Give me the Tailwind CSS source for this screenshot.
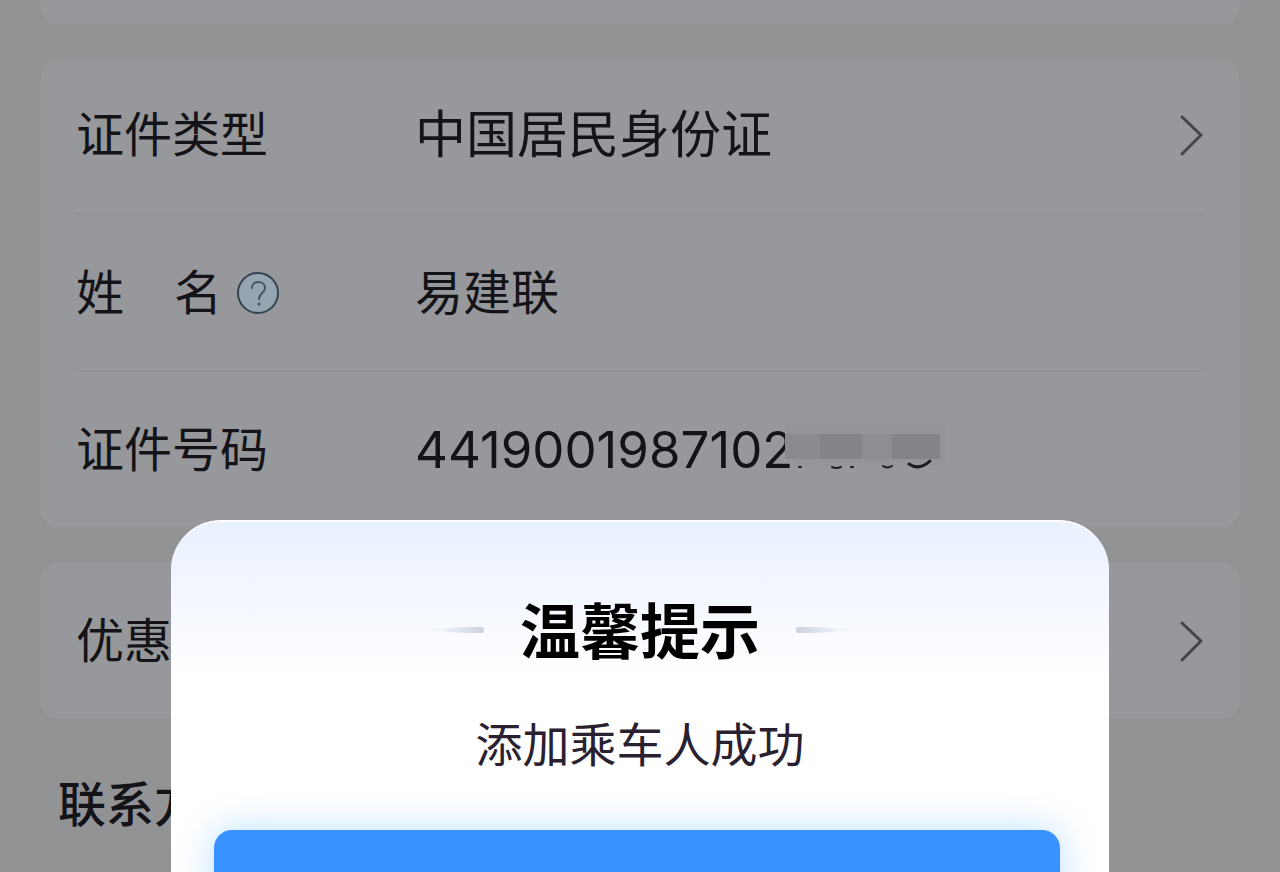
<!DOCTYPE html>
<html lang="zh-CN">
<head>
    <meta charset="UTF-8">
    <meta name="viewport" content="width=device-width, initial-scale=1.0">
    <title>添加乘车人</title>
    <script src="https://cdn.jsdelivr.net/npm/@tailwindcss/browser@4"></script>
</head>
<body class="relative h-screen overflow-hidden bg-[#929395] font-['Noto_Sans_CJK_SC',sans-serif] text-[48px] leading-[64px] text-[#141418]">
<main class="px-[41px]">
    <div class="h-[24px] rounded-b-2xl bg-[#97989b]"></div>

    <form class="mt-[36px] rounded-2xl bg-[#97989b] px-[35px]">
        <div class="flex h-[155px] items-center border-b-2 border-[#919296] pb-3">
            <label for="tipo" class="w-[339px] shrink-0">证件类型</label>
            <button type="button" id="tipo" class="flex flex-1 items-center justify-between text-left text-[51px]">
                中国居民身份证
                <svg class="mt-2 h-[44px] w-[28px]" viewBox="0 0 28 44" fill="none" stroke="#444548" stroke-width="3" stroke-linecap="round" stroke-linejoin="round">
                    <path d="M6 4 L25 22 L6 41"/>
                </svg>
            </button>
        </div>
        <div class="flex h-[157px] items-center border-b-2 border-[#919296] pb-2">
            <div class="flex w-[339px] shrink-0 items-center">
                <label for="nombre" class="flex w-[146px] justify-between"><span>姓</span><span>名</span></label>
                <button type="button" aria-label="帮助" class="ml-[14px] mt-2">
                    <svg class="size-[44px]" viewBox="0 0 44 44" fill="none" stroke-linecap="round">
                        <circle cx="22" cy="22" r="20" fill="#97a5b3" stroke="#34454f" stroke-width="2"/>
                        <path d="M16 17 C16 9 29 9 29 17 C29 22 23 22 23 28" stroke="#40565d" stroke-width="2"/>
                        <circle cx="23" cy="33" r="1.5" fill="#40565d"/>
                    </svg>
                </button>
            </div>
            <input type="text" id="nombre" value="易建联" class="min-w-0 flex-1 outline-none">
        </div>
        <div class="relative flex h-[155px] items-center pb-2">
            <label for="numero" class="w-[339px] shrink-0">证件号码</label>
            <input type="text" id="numero" value="4419001987102" class="mt-2 min-w-0 flex-1 font-[Inter,'Noto_Sans_CJK_SC',sans-serif] text-[51px] outline-none">
            <!-- mosaico sobre el final del número -->
            <svg class="absolute left-[704px] top-[50px] h-[54px] w-[168px]" viewBox="0 0 168 54">
                <path d="M5 4 H165 V44 H14 V37 H5 Z" fill="#949598"/>
                <rect x="5" y="12" width="35" height="25" fill="#8a8b8e"/>
                <rect x="40" y="12" width="42" height="25" fill="#838487"/>
                <rect x="82" y="12" width="30" height="25" fill="#8d8e92"/>
                <rect x="112" y="12" width="48" height="25" fill="#838488"/>
                <g fill="none" stroke="#1c1c20" stroke-width="2" stroke-linecap="round">
                    <path d="M19 45 h2 M71 45 h2"/>
                    <path d="M52 45 Q56 47 61 45"/>
                    <path d="M103 44 Q107 47 112 44"/>
                    <path d="M129 42 Q139 49 150 39" stroke-width="3"/>
                </g>
            </svg>
        </div>
    </form>

    <section class="mt-[36px] rounded-2xl bg-[#97989b] px-[35px]">
        <button type="button" class="flex h-[155px] w-full items-center justify-between pb-2 text-left">
            优惠类型
            <svg class="mt-2 h-[44px] w-[28px]" viewBox="0 0 28 44" fill="none" stroke="#444548" stroke-width="3" stroke-linecap="round" stroke-linejoin="round">
                <path d="M6 4 L25 22 L6 41"/>
            </svg>
        </button>
    </section>

    <h2 class="mt-[51px] pl-[17px] font-medium">联系方式</h2>
</main>

<!-- Modal de aviso -->
<div class="absolute inset-x-0 top-[520px] px-[171px]">
    <div role="dialog" aria-labelledby="titulo" class="rounded-t-[50px] border-t-2 border-white bg-linear-to-b from-[#e9f0ff] via-white via-[36%] to-white pt-[66px] text-center">
        <div class="flex items-center justify-center gap-[35px]">
            <svg class="mt-1 h-[6px] w-[62px]" viewBox="0 0 62 6">
                <linearGradient id="raya"><stop stop-color="#d3dcea" stop-opacity="0"/><stop offset="1" stop-color="#cbd3de"/></linearGradient>
                <path d="M0 3 L42 0 H60 Q62 3 60 6 H42 Z" fill="url(#raya)"/>
            </svg>
            <h1 id="titulo" class="text-[60px] font-bold leading-[80px] text-black">温馨提示</h1>
            <svg class="mt-1 h-[6px] w-[62px] -scale-x-100" viewBox="0 0 62 6">
                <path d="M0 3 L42 0 H60 Q62 3 60 6 H42 Z" fill="url(#raya)"/>
            </svg>
        </div>
        <p class="mt-[42px] text-[47px] text-[#2a2130]">添加乘车人成功</p>
        <div class="pl-[43px] pr-[49px] pt-[56px]">
            <button type="button" aria-label="确定" class="block h-[130px] w-full rounded-[18px] bg-[#3992ff] shadow-[0_0_36px_rgba(100,185,255,0.45)]"></button>
        </div>
    </div>
</div>
</body>
</html>
